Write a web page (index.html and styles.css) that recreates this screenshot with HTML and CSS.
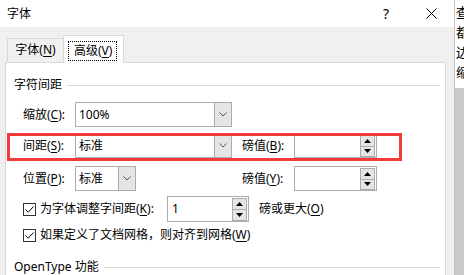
FILE: index.html
```html
<!DOCTYPE html>
<html lang="zh">
<head>
    <meta charset="UTF-8">
    <meta name="viewport" content="width=device-width, initial-scale=1.0">
    <title>字体</title>
    <link rel="stylesheet" href="styles.css">
</head>
<body>

<div class="screen">
    <div class="dialog">
        <div class="titlebar">
            <span class="title">字体</span>
            <span class="help">?</span>
            <svg class="close" width="11" height="11" viewBox="0 0 11 11"><path d="M0.5 0.5 L10.5 10.5 M10.5 0.5 L0.5 10.5" stroke="#000" stroke-width="1" fill="none"/></svg>
        </div>

        <div class="body">
            <div class="tabs">
                <div class="tab">字体(<u>N</u>)</div>
                <div class="tab active"><span class="focus">高级(<u>V</u>)</span></div>
            </div>

            <div class="panel">
                <div class="group-title">字符间距</div>

                <div class="row row-scale">
                    <span class="label">缩放(<u>C</u>):</span>
                    <div class="combo">
                        <span class="val">100%</span>
                        <span class="drop"><svg width="8" height="5" viewBox="0 0 8 5"><path d="M0.5 0.5 L4 4 L7.5 0.5" stroke="#555" fill="none"/></svg></span>
                    </div>
                </div>

                <div class="row row-spacing">
                    <span class="label">间距(<u>S</u>):</span>
                    <div class="combo">
                        <span class="val">标准</span>
                        <span class="drop"><svg width="8" height="5" viewBox="0 0 8 5"><path d="M0.5 0.5 L4 4 L7.5 0.5" stroke="#555" fill="none"/></svg></span>
                    </div>
                    <span class="label side">磅值(<u>B</u>):</span>
                    <div class="spin">
                        <span class="val"></span>
                        <span class="btns">
                            <span class="btn"><svg width="7" height="4" viewBox="0 0 7 4"><path d="M0 4 L3.5 0 L7 4 Z" fill="#000"/></svg></span>
                            <span class="btn"><svg width="7" height="4" viewBox="0 0 7 4"><path d="M0 0 L3.5 4 L7 0 Z" fill="#000"/></svg></span>
                        </span>
                    </div>
                    <div class="mark"></div>
                </div>

                <div class="row row-position">
                    <span class="label">位置(<u>P</u>):</span>
                    <div class="combo small">
                        <span class="val">标准</span>
                        <span class="drop"><svg width="8" height="5" viewBox="0 0 8 5"><path d="M0.5 0.5 L4 4 L7.5 0.5" stroke="#555" fill="none"/></svg></span>
                    </div>
                    <span class="label side far">磅值(<u>Y</u>):</span>
                    <div class="spin">
                        <span class="val"></span>
                        <span class="btns">
                            <span class="btn"><svg width="7" height="4" viewBox="0 0 7 4"><path d="M0 4 L3.5 0 L7 4 Z" fill="#000"/></svg></span>
                            <span class="btn"><svg width="7" height="4" viewBox="0 0 7 4"><path d="M0 0 L3.5 4 L7 0 Z" fill="#000"/></svg></span>
                        </span>
                    </div>
                </div>

                <div class="row row-kern">
                    <label class="check kern">
                        <span class="box"><svg width="11" height="11" viewBox="0 0 11 11"><path d="M1.5 5.5 L4.2 8.2 L9.5 2.5" stroke="#000" stroke-width="1" fill="none"/></svg></span>
                        为字体调整字间距(<u>K</u>):
                    </label>
                    <div class="spin narrow">
                        <span class="val">1</span>
                        <span class="btns">
                            <span class="btn"><svg width="7" height="4" viewBox="0 0 7 4"><path d="M0 4 L3.5 0 L7 4 Z" fill="#000"/></svg></span>
                            <span class="btn"><svg width="7" height="4" viewBox="0 0 7 4"><path d="M0 0 L3.5 4 L7 0 Z" fill="#000"/></svg></span>
                        </span>
                    </div>
                    <span class="after">磅或更大(<u>O</u>)</span>
                </div>

                <div class="row row-grid">
                    <label class="check">
                        <span class="box"><svg width="11" height="11" viewBox="0 0 11 11"><path d="M1.5 5.5 L4.2 8.2 L9.5 2.5" stroke="#000" stroke-width="1" fill="none"/></svg></span>
                        如果定义了文档网格，则对齐到网格(<u>W</u>)
                    </label>
                </div>

                <div class="group-title opentype">OpenType 功能</div>
            </div>
        </div>
    </div>

    <div class="doc">
        <div class="page">查看<br>都是<br>边距<br>缩进</div>
        <div class="rest"></div>
    </div>
</div>

</body>
</html>
```

FILE: styles.css
```css
body {
    margin: 0;
    font-family: "Noto Sans", "Noto Sans CJK SC", sans-serif;
    font-size: 12px;
    line-height: 16px;
    color: #000;
}
u {
    text-decoration: underline;
    text-underline-offset: 2px;
}
.screen {
    display: flex;
    width: 464px;
    height: 275px;
    overflow: hidden;
}
.dialog {
    width: 454px;
    flex-shrink: 0;
    display: flex;
    flex-direction: column;
    background: #f0f0f0;
    border-right: 1px solid #c4c4c4;
}
.titlebar {
    height: 27px;
    flex-shrink: 0;
    background: #fff;
    display: flex;
    align-items: center;
    padding-left: 7px;
}
.title {
    flex: 1;
}
.help {
    font-size: 14px;
}
.close {
    margin-left: 37px;
    margin-right: 17px;
}
.body {
    flex: 1;
    display: flex;
    flex-direction: column;
    padding-top: 8px;
}
.tabs {
    display: flex;
    align-items: flex-end;
    height: 27px;
    padding-left: 7px;
}
.tab {
    height: 24px;
    width: 56px;
    box-sizing: border-box;
    border: 1px solid #d9d9d9;
    border-bottom: none;
    border-right: none;
    padding-top: 3px;
    text-align: center;
}
.tab.active {
    height: 28px;
    width: 61px;
    margin-bottom: -1px;
    position: relative;
    z-index: 1;
    background: #fff;
    border-right: 1px solid #d9d9d9;
    padding: 5px 0 0 4px;
    text-align: left;
}
.focus {
    display: inline-block;
    border: 1px dotted #000;
    padding: 1px 4px 1px 5px;
}
.panel {
    flex: 1;
    margin-left: 5px;
    width: 441px;
    box-sizing: border-box;
    background: #fff;
    border: 1px solid #d9d9d9;
    border-bottom: none;
    padding: 14px 5px 0 8px;
}
.group-title {
    display: flex;
    align-items: center;
    height: 16px;
    white-space: nowrap;
}
.group-title::after {
    content: "";
    flex: 1;
    height: 1px;
    margin-left: 5px;
    background: #dcdcdc;
}
.group-title.opentype {
    margin-top: 14px;
}
.row {
    display: flex;
    align-items: center;
    margin-left: 9px;
    height: 25px;
}
.row-scale {
    margin-top: 9px;
}
.row-spacing {
    margin-top: 6px;
    position: relative;
}
.row-position {
    margin-top: 8px;
}
.row-kern {
    margin-top: 5px;
    height: 26px;
}
.row-grid {
    margin-top: 3px;
    height: 20px;
}
.label {
    width: 52px;
    flex-shrink: 0;
    white-space: nowrap;
}
.label.side {
    margin-left: 10px;
}
.label.side.far {
    margin-left: 106px;
}
.combo, .spin {
    display: flex;
    height: 25px;
    box-sizing: border-box;
    border: 1px solid #acacac;
    background: #fff;
}
.combo {
    width: 157px;
}
.combo.small {
    width: 61px;
}
.val {
    flex: 1;
    padding-left: 3px;
    line-height: 23px;
}
.drop {
    width: 16px;
    background: #e5e5e5;
    border-left: 1px solid #acacac;
    display: flex;
    align-items: center;
    justify-content: center;
}
.spin {
    width: 83px;
}
.spin.narrow {
    width: 82px;
    height: 26px;
}
.spin.narrow .val {
    padding-left: 4px;
    line-height: 24px;
}
.btns {
    width: 16px;
    box-sizing: border-box;
    display: flex;
    flex-direction: column;
    padding: 1px 1px 0 0;
}
.btn {
    flex: 1;
    box-sizing: border-box;
    background: #e5e5e5;
    border: 1px solid #acacac;
    display: flex;
    align-items: center;
    justify-content: center;
}
.btn + .btn {
    border-top: none;
}
.check {
    display: flex;
    align-items: center;
    white-space: nowrap;
}
.check.kern {
    width: 144px;
    flex-shrink: 0;
}
.box {
    width: 13px;
    height: 13px;
    box-sizing: border-box;
    border: 1px solid #333;
    background: #fff;
    margin-right: 4px;
    display: flex;
}
.after {
    margin-left: 10px;
    white-space: nowrap;
}
.mark {
    position: absolute;
    left: -16px;
    top: 0;
    width: 395px;
    height: 28px;
    box-sizing: border-box;
    border: 3px solid #f33a3a;
}
.doc {
    flex: 1;
    display: flex;
    flex-direction: column;
    overflow: hidden;
}
.page {
    height: 88px;
    flex-shrink: 0;
    background: #fff;
    padding: 2px 0 0 1px;
    box-sizing: border-box;
    font-size: 13px;
    line-height: 20px;
    white-space: nowrap;
}
.rest {
    flex: 1;
    background: #c9c9c9;
}
```
